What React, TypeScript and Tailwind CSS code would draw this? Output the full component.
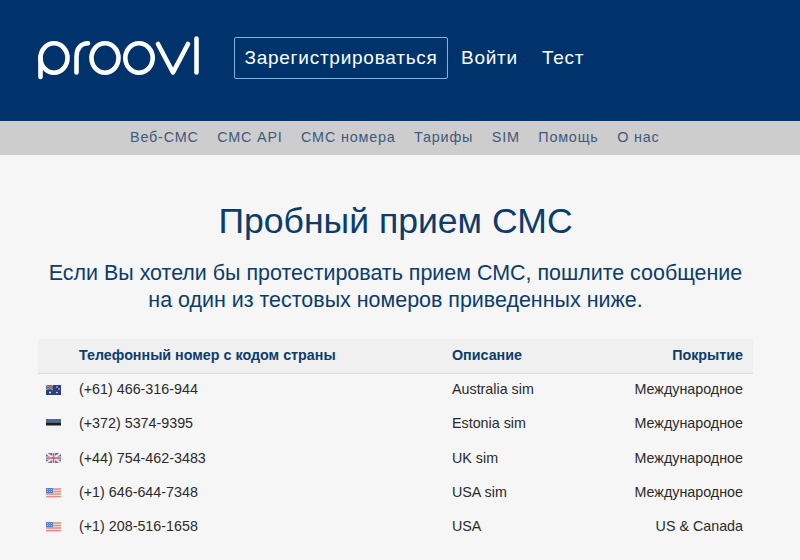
const rows = [
  { flag: 'au', phone: '(+61) 466-316-944', desc: 'Australia sim', cover: 'Международное' },
  { flag: 'ee', phone: '(+372) 5374-9395', desc: 'Estonia sim', cover: 'Международное' },
  { flag: 'uk', phone: '(+44) 754-462-3483', desc: 'UK sim', cover: 'Международное' },
  { flag: 'us', phone: '(+1) 646-644-7348', desc: 'USA sim', cover: 'Международное' },
  { flag: 'us', phone: '(+1) 208-516-1658', desc: 'USA', cover: 'US & Canada' },
]

function Flag({ code }: { code: string }) {
  if (code === 'ee') {
    return (
      <svg width="15" height="10" viewBox="0 0 15 10">
        <rect width="15" height="3.4" y="0" fill="#3a6fa8" />
        <rect width="15" height="3.3" y="3.4" fill="#1c1c1c" />
        <rect width="15" height="3.3" y="6.7" fill="#f1f1f1" />
      </svg>
    )
  }
  if (code === 'au') {
    return (
      <svg width="15" height="10" viewBox="0 0 15 10">
        <rect width="15" height="10" fill="#2b3f86" />
        <rect width="7" height="5" fill="#5a5f96" />
        <path d="M0 0L7 5M7 0L0 5" stroke="#d9a5ad" strokeWidth="1" />
        <path d="M3.5 0V5M0 2.5H7" stroke="#d8485a" strokeWidth="1.2" />
        <circle cx="11" cy="2" r=".7" fill="#fff" />
        <circle cx="13" cy="4" r=".7" fill="#fff" />
        <circle cx="11" cy="7.5" r=".8" fill="#fff" />
        <circle cx="4" cy="7.5" r=".9" fill="#fff" />
      </svg>
    )
  }
  if (code === 'uk') {
    return (
      <svg width="15" height="10" viewBox="0 0 15 10">
        <rect width="15" height="10" fill="#5b6ba3" />
        <path d="M0 0L15 10M15 0L0 10" stroke="#f0e6e8" strokeWidth="2" />
        <path d="M7.5 0V10M0 5H15" stroke="#f3f3f3" strokeWidth="3" />
        <path d="M7.5 0V10M0 5H15" stroke="#d0586a" strokeWidth="1.6" />
      </svg>
    )
  }
  return (
    <svg width="15" height="10" viewBox="0 0 15 10">
      <rect width="15" height="10" fill="#f4e4e2" />
      <path d="M0 1H15M0 3.5H15M0 6H15M0 8.6H15" stroke="#e88a86" strokeWidth="1.3" />
      <rect width="7" height="5.2" fill="#5a80cc" />
      <path d="M1 1.5H6M1 3.5H6" stroke="#b9c9ea" strokeWidth=".8" strokeDasharray="1 1" />
    </svg>
  )
}

function Logo() {
  return (
    <svg width="162" height="44" viewBox="0 0 162 44" fill="none" stroke="#fff" strokeWidth="4.6" strokeLinecap="round" strokeLinejoin="round">
      <path d="M2.5 41V21" />
      <ellipse cx="16" cy="22" rx="13.5" ry="14.7" />
      <path d="M38.5 36.5V21C38.5 12 43 7.5 50 7.3" />
      <ellipse cx="67" cy="22" rx="13.5" ry="14.7" />
      <ellipse cx="101" cy="22" rx="13.7" ry="14.7" />
      <path d="M120 8L135 36.5L150 8" />
      <path d="M158.5 2.5V36.5" />
    </svg>
  )
}

export default function App() {
  return (
    <div className="h-[560px] w-[800px] overflow-hidden bg-[#f6f6f6] font-['Liberation_Sans',sans-serif]">
      <header className="flex h-[121px] items-center bg-[#00336b] pb-[6px] pl-[38px]">
        <Logo />
        <nav className="ml-[34px] flex items-center pt-[1px] text-[19px] tracking-[0.75px] text-white">
          <a className="flex h-[42px] w-[214px] items-center justify-center rounded-[2px] border border-[#7fb0e0]">Зарегистрироваться</a>
          <a className="ml-[13px]">Войти</a>
          <a className="ml-[24px]">Тест</a>
        </nav>
      </header>

      <nav className="flex h-[34px] items-center gap-[18.5px] bg-[#cdcdcd] pl-[130px] text-[14.4px] tracking-[0.8px] text-[#40597c]">
        <a>Веб-СМС</a>
        <a>СМС API</a>
        <a>СМС номера</a>
        <a>Тарифы</a>
        <a>SIM</a>
        <a>Помощь</a>
        <a>О нас</a>
      </nav>

      <main className="flex w-[791px] flex-col items-center text-[#0b3c6b]">
        <h1 className="mt-[46px] text-[35.6px] leading-[40px]">Пробный прием СМС</h1>
        <p className="mt-[19px] w-[700px] text-center text-[21.45px] leading-[27px]">
          Если Вы хотели бы протестировать прием СМС, пошлите сообщение на один из тестовых номеров приведенных ниже.
        </p>

        <table className="mt-[25px] w-[715px] text-[14.3px] text-[#2a2a2a]">
          <thead>
            <tr className="h-[34px] border-b border-[#ddd] bg-[#f0f0f0] text-[#0b3c6b]">
              <th className="w-[41px]" />
              <th className="text-left font-bold">Телефонный номер с кодом страны</th>
              <th className="w-[142px] text-left font-bold">Описание</th>
              <th className="w-[159px] pr-[10px] text-right font-bold">Покрытие</th>
            </tr>
          </thead>
          <tbody>
            {rows.map((row) => (
              <tr key={row.phone + row.desc} className="h-[34.3px]">
                <td className="pb-[1px] pl-[8px]">
                  <Flag code={row.flag} />
                </td>
                <td className="pb-[1px]">{row.phone}</td>
                <td className="pb-[1px]">{row.desc}</td>
                <td className="pb-[1px] pr-[10px] text-right">{row.cover}</td>
              </tr>
            ))}
          </tbody>
        </table>
      </main>
    </div>
  )
}
